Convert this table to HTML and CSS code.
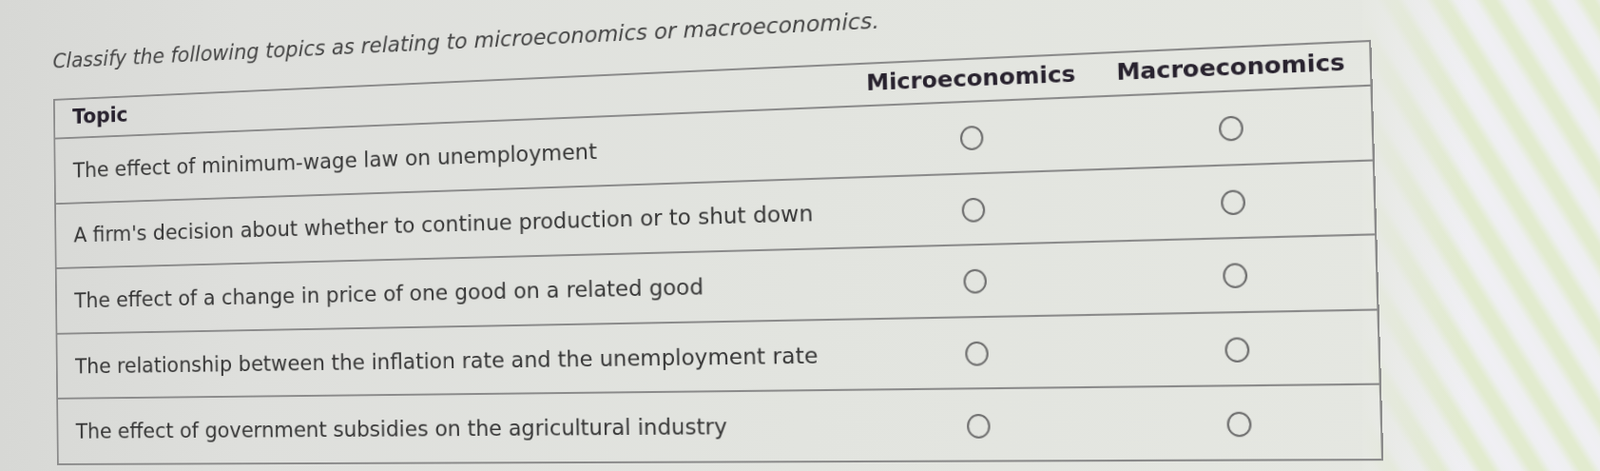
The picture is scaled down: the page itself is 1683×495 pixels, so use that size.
FILE: index.html
```html
<!DOCTYPE html>
<html lang="en">
<head>
<meta charset="utf-8">
<title>Classify topics</title>
<link rel="stylesheet" href="styles.css">
</head>
<body>
<div class="photo">
  <p class="prompt">Classify the following topics as relating to microeconomics or macroeconomics.</p>
  <table class="grid">
    <colgroup><col class="c-topic"><col class="c-micro"><col class="c-macro"></colgroup>
    <thead>
      <tr><th class="th-topic">Topic</th><th>Microeconomics</th><th>Macroeconomics</th></tr>
    </thead>
    <tbody>
      <tr><td class="topic">The effect of minimum-wage law on unemployment</td><td><span class="radio"></span></td><td><span class="radio"></span></td></tr>
      <tr><td class="topic">A firm's decision about whether to continue production or to shut down</td><td><span class="radio"></span></td><td><span class="radio"></span></td></tr>
      <tr><td class="topic">The effect of a change in price of one good on a related good</td><td><span class="radio"></span></td><td><span class="radio"></span></td></tr>
      <tr><td class="topic">The relationship between the inflation rate and the unemployment rate</td><td><span class="radio"></span></td><td><span class="radio"></span></td></tr>
      <tr><td class="topic">The effect of government subsidies on the agricultural industry</td><td><span class="radio"></span></td><td><span class="radio"></span></td></tr>
    </tbody>
  </table>
</div>
</body>
</html>
```
FILE: styles.css
```css
html, body {
  margin: 0;
  padding: 0;
}
body {
  width: 1683px;
  height: 495px;
  overflow: hidden;
  font-family: "DejaVu Sans", Verdana, sans-serif;
  background:
    linear-gradient(to right, #e6e8e2 0, rgba(230, 232, 226, 0.5) 50px, rgba(230, 232, 226, 0) 110px) right top / 250px 100% no-repeat,
    repeating-linear-gradient(58deg, #f0eff4 0, #eeeff0 10px, #e2ebcf 19px, #e2ebcf 29px, #eeeff0 37px, #f0eff4 44px) right top / 250px 100% no-repeat,
    linear-gradient(to right, #d7d8d5 0, #dedfdc 15%, #e2e4df 50%, #e6e8e2 100%);
}
.photo {
  width: 1683px;
  height: 495px;
  box-sizing: border-box;
  padding: 14px 0 0 58px;
  transform-origin: 0 0;
  transform: matrix3d(0.862658, -0.0485904, 0, -0.0000933753, 0.008944, 0.923404, 0, -0.0000127461, 0, 0, 1, 0, 5.33976, 42.17996, 0, 1.006308);
}
.prompt {
  margin: 0;
  font-size: 23px;
  line-height: 27px;
  font-style: italic;
  color: #444444;
}
.grid {
  margin-top: 29px;
  width: 1388px;
  table-layout: fixed;
  border-collapse: collapse;
  border: 2px solid #8a8a8a;
  font-size: 23px;
  color: #363636;
}
.c-topic { width: 884px; }
.c-micro { width: 242px; }
.c-macro { width: 262px; }
.grid th,
.grid td {
  padding: 0;
  border-top: 2px solid #8a8a8a;
  border-bottom: 2px solid #8a8a8a;
  text-align: center;
  vertical-align: middle;
}
.grid thead tr { height: 44px; }
.grid tbody tr { height: 73.6px; }
.grid th {
  font-weight: bold;
  color: #28222e;
  padding-bottom: 4px;
}
.grid th.th-topic,
.grid td.topic {
  text-align: left;
  padding-left: 21px;
}
.radio {
  display: inline-block;
  width: 19px;
  height: 21px;
  border: 2px solid #6e6e6e;
  border-radius: 50%;
  vertical-align: middle;
}
```
